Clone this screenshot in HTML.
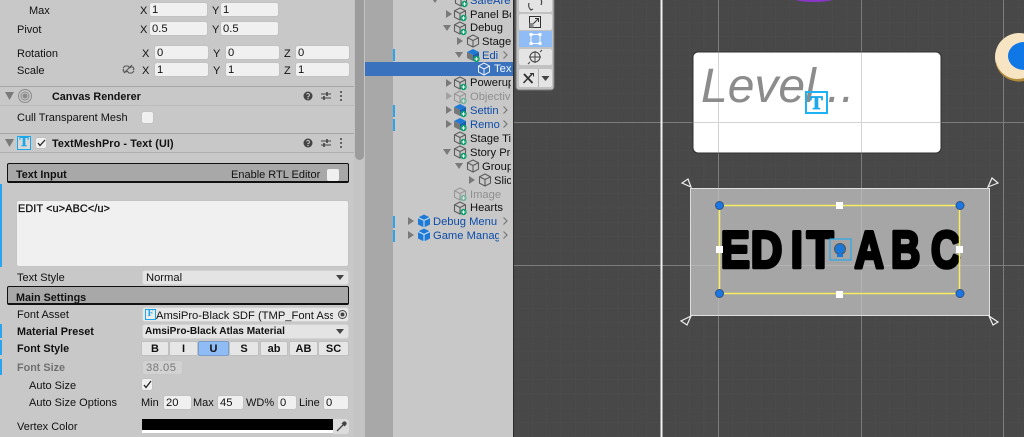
<!DOCTYPE html>
<html><head><meta charset="utf-8"><style>
html,body{margin:0;padding:0;background:#484848}
#p{position:relative;width:1024px;height:437px;overflow:hidden;font-family:"Liberation Sans",sans-serif;background:#484848;filter:blur(.35px)}
#p div{position:absolute}
.t{white-space:nowrap;font-size:11px;line-height:14px;height:14px;color:#111;margin-top:1px}
.b{font-weight:bold;font-size:10.8px}
.f{background:#f0f0f0;border:1px solid #c2c2c2;border-radius:3px;box-sizing:border-box;height:15px;font-size:11.2px;line-height:15px;color:#111;padding-left:2px;white-space:nowrap;overflow:hidden}
.l{background:#a6a6a6;height:1px;left:0;width:354px}
.sec{background:#a8a8a8;border:1px solid #111;border-width:1.5px 1px 2px 1px;border-radius:2px;box-sizing:border-box;left:7px;width:342px}
.btn{background:#e6e6e6;border:1px solid #c0c0c0;box-sizing:border-box;height:15px;top:341px;text-align:center;font-size:11px;line-height:14px;font-weight:bold;color:#111;border-radius:2px}
.h{white-space:nowrap;font-size:11.2px;line-height:14px;height:14px;color:#111;overflow:hidden;margin-top:1px}
.bl{color:#0d4ca8}
.st{background:#2aa4ef;width:2px}
svg{position:absolute;overflow:visible}
</style></head><body><div id="p">

<!-- inspector -->
<div style="left:0;top:0;width:354px;height:437px;background:#c8c8c8"></div>
<div style="left:354px;top:0;width:11px;height:437px;background:#c4c4c4"></div>
<div style="left:355px;top:0;width:9px;height:160px;background:#9c9c9c;border-radius:0 0 5px 5px"></div>
<div style="left:365px;top:0;width:28px;height:437px;background:#a8a8a8"></div>

<div class="t" style="left:29px;top:3px">Max</div>
<div class="t" style="left:140px;top:3px">X</div><div class="f" style="left:149px;top:2px;width:59px">1</div>
<div class="t" style="left:212px;top:3px">Y</div><div class="f" style="left:220px;top:2px;width:59px">1</div>
<div class="t" style="left:17px;top:22px">Pivot</div>
<div class="t" style="left:140px;top:22px">X</div><div class="f" style="left:149px;top:21px;width:59px">0.5</div>
<div class="t" style="left:212px;top:22px">Y</div><div class="f" style="left:220px;top:21px;width:59px">0.5</div>
<div class="t" style="left:17px;top:46px">Rotation</div>
<div class="t" style="left:142px;top:46px">X</div><div class="f" style="left:154px;top:45px;width:55px">0</div>
<div class="t" style="left:213px;top:46px">Y</div><div class="f" style="left:225px;top:45px;width:55px">0</div>
<div class="t" style="left:284px;top:46px">Z</div><div class="f" style="left:295px;top:45px;width:55px">0</div>
<div class="t" style="left:17px;top:63px">Scale</div>
<svg style="left:122px;top:64px" width="13" height="11" viewBox="0 0 13 11" fill="none" stroke="#555" stroke-width="1.1"><path d="M1 4l2-2h3l2 2M5 7l2 2h3l2-2M2 9L10 1M8 4l1-1h2l1 2-1 1M5 7L4 8H2L1 6l1-1"/></svg>
<div class="t" style="left:142px;top:63px">X</div><div class="f" style="left:154px;top:62px;width:55px">1</div>
<div class="t" style="left:213px;top:63px">Y</div><div class="f" style="left:225px;top:62px;width:55px">1</div>
<div class="t" style="left:284px;top:63px">Z</div><div class="f" style="left:295px;top:62px;width:55px">1</div>

<div class="l" style="top:86px"></div>
<div class="l" style="top:105px;background:#bcbcbc"></div>
<svg style="left:5px;top:92px" width="9" height="8"><path d="M0 0h9L4.500 8z" fill="#7a7a7a"/></svg>
<svg style="left:17px;top:88px" width="16" height="16" viewBox="0 0 16 16" fill="none" stroke="#8a8a8a"><circle cx="8" cy="8" r="6.500"/><circle cx="8" cy="8" r="4"/><circle cx="8" cy="8" r="2" fill="#8a8a8a"/></svg>
<div class="t b" style="left:52px;top:89px">Canvas Renderer</div>
<div class="t" style="left:17px;top:110px">Cull Transparent Mesh</div>
<div class="f" style="left:141px;top:111px;width:13px;height:13px"></div>

<div class="l" style="top:133px"></div>
<svg style="left:5px;top:139px" width="9" height="8"><path d="M0 0h9L4.500 8z" fill="#7a7a7a"/></svg>
<div style="left:17px;top:136px;border:1px solid #19a8ee;background:#d8d8d8;width:12px;height:12px"></div>
<div style="left:17px;top:135px;width:14px;height:15px;font:bold 14px/15px 'Liberation Serif',serif;color:#1aa6ea;text-align:center;-webkit-text-stroke:.4px #1aa6ea">T</div>
<div class="f" style="left:35px;top:137px;width:12px;height:12px;background:#f0f0f0"></div>
<svg style="left:37px;top:139px" width="9" height="8" fill="none" stroke="#222" stroke-width="1.300"><path d="M1 4l2 2.500L8 1"/></svg>
<div class="t b" style="left:52px;top:136px;letter-spacing:.12px">TextMeshPro - Text (UI)</div>
<div class="l" style="top:152px;background:#b0b0b0"></div>

<!-- header icons -->
<svg style="left:302px;top:90px" width="12" height="12"><circle cx="6" cy="6" r="4.500" fill="#444"/><circle cx="6" cy="8.500" r=".7" fill="#ccc"/><path d="M4.500 4.500a1.500 1.500 0 1 1 1.500 2v.5" fill="none" stroke="#ccc"/></svg>
<svg style="left:320px;top:90px" width="12" height="12" fill="none" stroke="#444"><path d="M1 4h10M1 8h10"/><path d="M7 2v4M4 6v4" stroke-width="1.600"/></svg>
<svg style="left:338px;top:90px" width="6" height="12" fill="#444"><circle cx="3" cy="2" r="1"/><circle cx="3" cy="6" r="1"/><circle cx="3" cy="10" r="1"/></svg>
<svg style="left:302px;top:137px" width="12" height="12"><circle cx="6" cy="6" r="4.500" fill="#444"/><circle cx="6" cy="8.500" r=".7" fill="#ccc"/><path d="M4.500 4.500a1.500 1.500 0 1 1 1.500 2v.5" fill="none" stroke="#ccc"/></svg>
<svg style="left:320px;top:137px" width="12" height="12" fill="none" stroke="#444"><path d="M1 4h10M1 8h10"/><path d="M7 2v4M4 6v4" stroke-width="1.600"/></svg>
<svg style="left:338px;top:137px" width="6" height="12" fill="#444"><circle cx="3" cy="2" r="1"/><circle cx="3" cy="6" r="1"/><circle cx="3" cy="10" r="1"/></svg>

<!-- Text input -->
<div class="sec" style="top:163px;height:20px"></div>
<div class="t b" style="left:16px;top:167px">Text Input</div>
<div class="t" style="left:231px;top:167px">Enable RTL Editor</div>
<div style="left:327px;top:169px;width:12px;height:12px;background:#f0f0f0;border-radius:2px"></div>
<div class="st" style="left:0;top:184px;height:83px"></div>
<div style="left:16px;top:200px;width:333px;height:67px;background:#f0f0f0;border:1px solid #c4c4c4;border-radius:3px;box-sizing:border-box"></div>
<div class="t" style="left:18px;top:201px;font-size:10.8px;letter-spacing:.15px;-webkit-text-stroke:.3px #111">EDIT &lt;u&gt;ABC&lt;/u&gt;</div>
<div class="t" style="left:17px;top:270px">Text Style</div>
<div class="f" style="left:142px;top:270px;width:207px;height:15px;background:#e4e4e4;padding-left:3px;border-color:#d2d2d2">Normal</div>
<svg style="left:336px;top:275px" width="8" height="6"><path d="M0 0h8L4 5z" fill="#444"/></svg>

<div class="sec" style="top:286px;height:19px"></div>
<div class="t b" style="left:16px;top:290px">Main Settings</div>

<div class="t" style="left:17px;top:307px">Font Asset</div>
<div class="f" style="left:142px;top:307px;width:207px;height:15px;background:#e8e8e8;border-color:#d2d2d2"></div>
<div style="left:145px;top:309px;width:9px;height:9px;border:1px solid #1aa6ea;background:#eee"></div>
<div style="left:145px;top:308px;width:11px;height:12px;font:bold 10px/12px 'Liberation Serif',serif;color:#1aa6ea;text-align:center">F</div>
<div class="t" style="left:156px;top:308px;width:177px;overflow:hidden;font-size:11.2px">AmsiPro-Black SDF (TMP_Font Asset)</div>
<svg style="left:336px;top:308px" width="13" height="13" fill="none" stroke="#444"><circle cx="6.500" cy="6.500" r="4"/><circle cx="6.500" cy="6.500" r="1.500" fill="#444"/></svg>

<div class="t b" style="left:17px;top:324px">Material Preset</div>
<div class="f" style="left:142px;top:324px;width:207px;background:#e4e4e4;padding-left:2px;font-weight:bold;font-size:10.1px;line-height:14px;border-color:#d2d2d2">AmsiPro-Black Atlas Material</div>
<svg style="left:336px;top:329px" width="8" height="6"><path d="M0 0h8L4 5z" fill="#444"/></svg>
<div class="st" style="left:0;top:324px;height:14px"></div>
<div class="st" style="left:0;top:340px;height:15px"></div>
<div class="st" style="left:0;top:359px;height:16px"></div>

<div class="t b" style="left:17px;top:341px">Font Style</div>
<div class="btn" style="left:141px;width:28px">B</div>
<div class="btn" style="left:169px;width:29px">I</div>
<div class="btn" style="left:198px;width:31px;background:#8fbcf5;border-color:#7a9ecb">U</div>
<div class="btn" style="left:229px;width:30px">S</div>
<div class="btn" style="left:260px;width:28px">ab</div>
<div class="btn" style="left:289px;width:29px">AB</div>
<div class="btn" style="left:318px;width:31px">SC</div>

<div class="t b" style="left:17px;top:360px;color:#707070">Font Size</div>
<div class="f" style="left:142px;top:360px;width:41px;height:15px;background:#d2d2d2;color:#777;padding-left:3px;border-color:#c6c6c6;letter-spacing:.5px">38.05</div>
<div class="t" style="left:29px;top:378px">Auto Size</div>
<div class="f" style="left:141px;top:378px;width:12px;height:13px"></div>
<svg style="left:143px;top:380px" width="9" height="9" fill="none" stroke="#222" stroke-width="1.300"><path d="M1 5l2 2.500L8 1"/></svg>
<div class="t" style="left:29px;top:395px">Auto Size Options</div>
<div class="t" style="left:141px;top:395px">Min</div><div class="f" style="left:163px;top:395px;width:29px">20</div>
<div class="t" style="left:193px;top:395px">Max</div><div class="f" style="left:217px;top:395px;width:27px">45</div>
<div class="t" style="left:246px;top:395px">WD%</div><div class="f" style="left:277px;top:395px;width:20px">0</div>
<div class="t" style="left:299px;top:395px">Line</div><div class="f" style="left:323px;top:395px;width:26px">0</div>
<div class="t" style="left:17px;top:419px">Vertex Color</div>
<div style="left:142px;top:419px;width:191px;height:11px;background:#000"></div>
<div style="left:142px;top:430px;width:191px;height:3px;background:#fff"></div>
<div style="left:333px;top:419px;width:16px;height:15px;background:#dcdcdc;border-radius:0 3px 3px 0"></div>
<svg style="left:336px;top:421px" width="11" height="11" fill="none" stroke="#444" stroke-width="1.300"><path d="M1 10l6-6M6 2l3 3"/><circle cx="8.500" cy="2.500" r="1.500" fill="#444"/></svg>

<!-- hierarchy -->
<div style="left:393px;top:0;width:120px;height:437px;background:#c8c8c8"></div>
<div class="st" style="left:393px;top:49px;height:12px"></div>
<div class="st" style="left:393px;top:105px;height:12px"></div>
<div class="st" style="left:393px;top:119px;height:12px"></div>
<div class="st" style="left:393px;top:216px;height:12px"></div>
<div class="st" style="left:393px;top:230px;height:12px"></div>
<div style="left:365px;top:62px;width:148px;height:14px;background:#3a72bd"></div>

<svg style="left:0;top:0;width:1024px;height:437px" width="1024" height="437" viewBox="0 0 1024 437">
<defs>
<g id="c"><path d="M0 -6L5.500 -3.200V3.200L0 6L-5.500 3.200V-3.200ZM-5.500 -3.200L0 -.5L5.500 -3.200M0 -.5V6" fill="none" stroke="#5c5c5c" stroke-width="1.100"/></g>
<g id="cp"><use href="#c"/><circle cx="3.500" cy="4" r="3.200" fill="#12a06e"/><path d="M1.700 4h3.600M3.500 2.200v3.600" stroke="#fff" stroke-width=".9"/></g>
<g id="bc"><path d="M0 -6.500L6 -3.500V3.500L0 6.500L-6 3.500V-3.500Z" fill="#1e7ad6"/><path d="M-6 -3.500L0 -.5L6 -3.500M0 -.5V6.500" fill="none" stroke="#d8e8f8" stroke-width="1"/></g>
<g id="bp"><path d="M0 -6L6 -3L0 0L-6 -3Z" fill="#1e7ad6"/><path d="M-6 -3V3L0 6V0Z" fill="#777"/><path d="M6 -3V3L0 6V0Z" fill="#1760b0"/><circle cx="3.500" cy="4" r="3.200" fill="#12a06e"/><path d="M1.700 4h3.600M3.500 2.200v3.600" stroke="#fff" stroke-width=".9"/></g>
<path id="tr" d="M0 -4L6 0L0 4Z" fill="#7a7a7a"/>
<path id="td" d="M-4 -3H4L0 3Z" fill="#7a7a7a"/>
<path id="ch" d="M-1.500 -3.500L2 0L-1.500 3.500" fill="none" stroke="#777" stroke-width="1.200"/>
</defs>
<use href="#td" x="435" y="0"/><use href="#cp" x="461" y="0"/>
<use href="#tr" x="446" y="14"/><use href="#cp" x="460" y="14"/>
<use href="#td" x="447" y="28"/><use href="#cp" x="460" y="28"/>
<use href="#tr" x="457" y="41"/><use href="#c" x="473" y="41"/>
<use href="#td" x="459" y="55"/><use href="#bp" x="473" y="55"/>
<use href="#ch" x="505" y="55"/><use href="#ch" x="505" y="110"/><use href="#ch" x="505" y="124"/>
<use href="#ch" x="505" y="221"/><use href="#ch" x="505" y="235"/>
<path transform="translate(484,69)" d="M0 -6L5.500 -3V3L0 6L-5.500 3V-3ZM-5.500 -3L0 0L5.500 -3M0 0V6" fill="none" stroke="#e8eef8"/>
<use href="#tr" x="446" y="83"/><use href="#cp" x="460" y="83"/>
<use href="#tr" x="446" y="96" opacity=".5"/><use href="#cp" x="460" y="97" opacity=".45"/>
<use href="#tr" x="446" y="110"/><use href="#bp" x="460" y="110"/>
<use href="#tr" x="446" y="124"/><use href="#bp" x="460" y="124"/>
<use href="#cp" x="460" y="138"/>
<use href="#td" x="447" y="152"/><use href="#cp" x="460" y="152"/>
<use href="#td" x="459" y="166"/><use href="#c" x="473" y="166"/>
<use href="#tr" x="469" y="180"/><use href="#c" x="485" y="180"/>
<use href="#cp" x="460" y="194" opacity=".45"/>
<use href="#cp" x="460" y="208"/>
<use href="#tr" x="408" y="221"/><use href="#bc" x="424" y="221"/>
<use href="#tr" x="408" y="235"/><use href="#bc" x="424" y="235"/>
</svg>

<div class="h bl" style="left:470px;top:-7px;width:41px">SafeAreaC</div>
<div class="h" style="left:470px;top:7px;width:41px">Panel Bo</div>
<div class="h" style="left:470px;top:20px;width:41px">Debug</div>
<div class="h" style="left:482px;top:34px;width:29px">Stage</div>
<div class="h bl" style="left:482px;top:48px;width:20px">Edi</div>
<div class="h" style="left:494px;top:61px;width:18px;color:#f2f6fc">Tex</div>
<div class="h" style="left:470px;top:75px;width:41px">Powerup</div>
<div class="h" style="left:470px;top:89px;width:41px;color:#8f8f8f">Objectiv</div>
<div class="h bl" style="left:470px;top:103px;width:33px">Settin</div>
<div class="h bl" style="left:470px;top:117px;width:33px">Remo</div>
<div class="h" style="left:470px;top:131px;width:41px">Stage Ti</div>
<div class="h" style="left:470px;top:145px;width:41px">Story Pro</div>
<div class="h" style="left:482px;top:159px;width:29px">Group</div>
<div class="h" style="left:494px;top:173px;width:17px">Slic</div>
<div class="h" style="left:470px;top:187px;width:41px;color:#8f8f8f">Image</div>
<div class="h" style="left:470px;top:200px;width:41px">Hearts</div>
<div class="h bl" style="left:433px;top:214px;width:70px">Debug Menu</div>
<div class="h bl" style="left:433px;top:228px;width:66px">Game Manag</div>

<!-- scene -->
<div style="left:513px;top:0;width:1px;height:437px;background:#2c2c2c"></div>
<svg style="left:514px;top:0" width="510" height="437" viewBox="514 0 510 437">
<defs><pattern id="g" x="718" y="122" width="14.300" height="14.300" patternUnits="userSpaceOnUse"><path d="M0 0H14.300M0 0V14.300" stroke="#525252" stroke-width="1" fill="none"/></pattern></defs>
<rect x="514" y="0" width="510" height="437" fill="url(#g)" opacity=".5"/>
<g stroke="#7c7c7c" stroke-width="1"><path d="M718.500 0V437M861.500 0V437M1003.500 0V437M514 122.500H1024M514 265.500H1024"/></g>
<path d="M661.500 0V437" stroke="#f2f2f2" stroke-width="2"/>
<path d="M795 0H833Q825 2 814 2T795 0Z" fill="#8a35c8"/>
<rect x="693" y="52" width="248" height="101" rx="5" fill="#fff" stroke="#2f2f2f" stroke-width="1"/>
<g stroke="#d4d4d4"><path d="M718.500 53V152M861.500 53V152M694 122.500H940"/></g>
<text x="701" y="102" font-family="Liberation Sans" font-style="italic" font-size="48" fill="#8c8c8c">Level<tspan x="827">.</tspan><tspan x="841">.</tspan></text>
<rect x="806" y="92" width="21" height="21" fill="none" stroke="#1cb2f4" stroke-width="2"/>
<text x="816.500" y="109" text-anchor="middle" font-family="Liberation Serif" font-weight="bold" font-size="19" fill="#1ca8ec" stroke="#1ca8ec" stroke-width=".8">T</text>
<circle cx="1019" cy="57" r="24" fill="#f6e4c2"/>
<path d="M996 65A24 24 0 0 0 1024 81V78A22 22 0 0 1 996 62Z" fill="#b08a3a"/>
<ellipse cx="1024" cy="56" rx="16" ry="14" fill="#0f78e6"/>

<rect x="690.500" y="188.500" width="299" height="127" fill="#a6a6a6" stroke="#dedede" stroke-width="1"/>
<path d="M718.500 189V315M861.500 189V315M691 265.500H989" stroke="#b4b4b4"/>
<text transform="scale(.84,1)" x="858 893.800 941.400 960.400" y="267.500" font-family="Liberation Sans" font-weight="bold" font-size="52" fill="#000" stroke="#000" stroke-width="3.500" stroke-linejoin="round">EDIT</text>
<text transform="scale(.78,1)" x="1095.500 1142.300 1193.600" y="267.500" font-family="Liberation Sans" font-weight="bold" font-size="52" fill="#000" stroke="#000" stroke-width="3.500" stroke-linejoin="round">ABC</text>
<rect x="719.500" y="205.500" width="240" height="88" fill="none" stroke="#f6ee5c" stroke-width="1.500"/>
<g fill="#fff"><rect x="836" y="202" width="7" height="7"/><rect x="836" y="291" width="7" height="7"/><rect x="716" y="246" width="7" height="7"/><rect x="956" y="246" width="7" height="7"/></g>
<g fill="#1a78e6" stroke="#33507a"><circle cx="719.500" cy="205.500" r="4"/><circle cx="960" cy="205.500" r="4"/><circle cx="719.500" cy="293.500" r="4"/><circle cx="960" cy="293.500" r="4"/></g>
<rect x="830" y="239" width="21" height="21" fill="none" stroke="#2aa8ec" stroke-width="1.200"/>
<circle cx="840" cy="249" r="5.500" fill="#1a78d8" stroke="#555"/><rect x="837" y="254" width="6" height="3" fill="#1a78d8"/>
<g fill="none" stroke="#eee" stroke-width="1.200"><path d="M682 183L688 179L691 187ZM988 187L998 183L992 178ZM691 316L681 321L687 325ZM989 316L998 322L993 325Z"/></g>

<!-- toolbar -->
<rect x="516" y="-4" width="38" height="94" rx="3" fill="#c2c2c2" stroke="#777"/>
<rect x="519" y="-4" width="33" height="16" rx="2" fill="#e4e4e4"/>
<path d="M529 3a6.500 6.500 0 0 0 2 7l2-1M541 5a6.500 6.500 0 0 0-2-8" fill="none" stroke="#444" stroke-width="1.200"/>
<rect x="519" y="14" width="33" height="16" rx="2" fill="#e4e4e4"/>
<rect x="529.500" y="16.500" width="11" height="11" fill="none" stroke="#333"/><path d="M533 24l5-5M535 18.500h3.500V22" fill="none" stroke="#333"/><rect x="529.500" y="23" width="4" height="4.500" fill="#888"/>
<rect x="519" y="31" width="33" height="16" fill="#8fbcf5"/>
<rect x="531" y="34.500" width="9" height="9" fill="none" stroke="#fff"/><g fill="#fff"><rect x="529.500" y="33" width="3" height="3"/><rect x="538.500" y="33" width="3" height="3"/><rect x="529.500" y="42" width="3" height="3"/><rect x="538.500" y="42" width="3" height="3"/></g>
<rect x="519" y="49" width="33" height="16" rx="2" fill="#e4e4e4"/>
<circle cx="535" cy="57" r="5" fill="none" stroke="#444"/><path d="M535 51V63M529 57H541M530 62l-2 2M540 52l2-2" stroke="#444"/>
<rect x="519" y="69" width="33" height="18" rx="2" fill="#e4e4e4"/><path d="M538.500 69V87" stroke="#b0b0b0"/>
<path d="M524 74l8.500 9" stroke="#333" stroke-width="2"/><path d="M532.500 73.500l-9 9.500" stroke="#333" stroke-width="1.500"/><path d="M530 73.500h3.500v3" fill="none" stroke="#333"/>
<path d="M541.500 76h8l-4 5z" fill="#444"/>
</svg>
</div></body></html>
